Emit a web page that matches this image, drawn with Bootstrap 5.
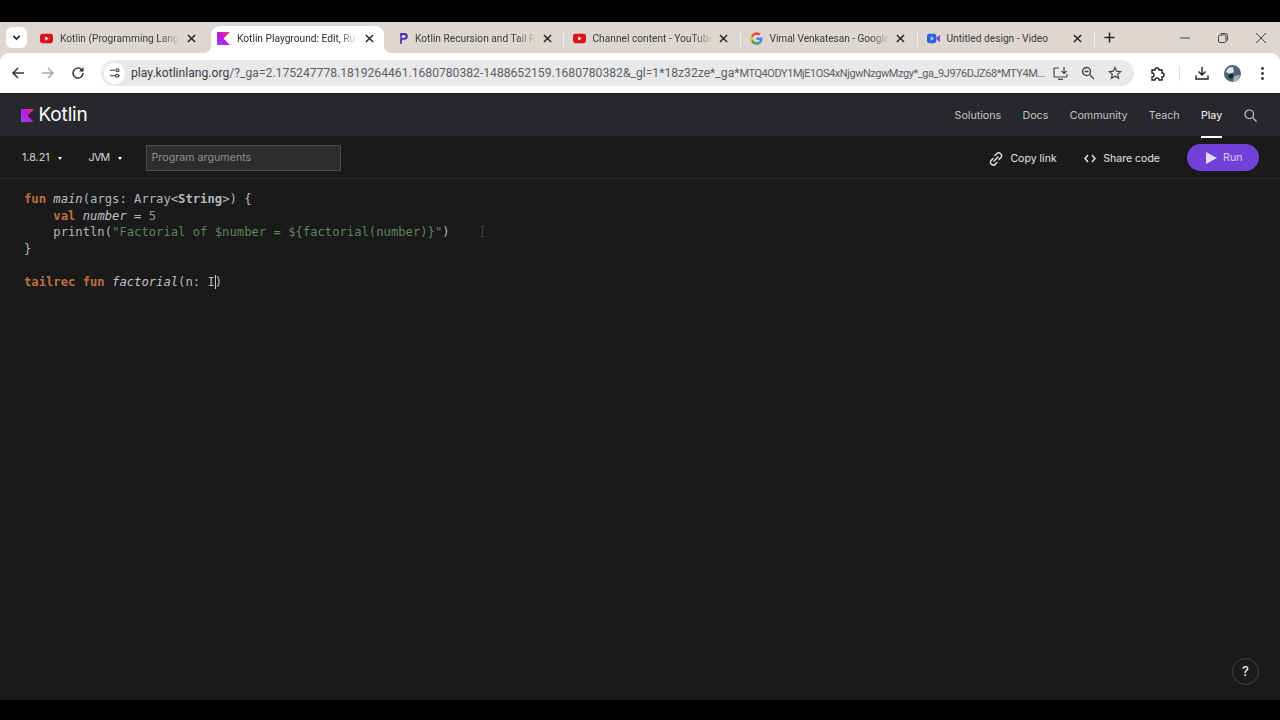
<!DOCTYPE html>
<html lang="en">
<head>
<meta charset="utf-8">
<title>Kotlin Playground</title>
<link rel="stylesheet" href="https://cdn.jsdelivr.net/npm/bootstrap@5.3.0/dist/css/bootstrap.min.css">
<style>
html,body{height:720px;overflow:hidden;background:#000}
body{padding:22px 0 20px;font-family:Inter,"Liberation Sans",sans-serif}
.shot{height:678px}
.browser-top{background:#ded6d0}
.tabstrip{height:31px;padding-left:6px}
.tab-menu{width:21px;height:21px;background:#fff;border-radius:6px;margin:5px 6px 0 0}
.chrome-tab{width:176px;height:31px;padding:1px 11.7px 0 9.3px;gap:6.5px;font:10.2px Roboto,"Liberation Sans",sans-serif;color:#3c3c3c;flex:none}
.tab-first{width:177px;padding:1px 14px 0 7px;gap:7px}
.chrome-tab.current{background:#fff;border-radius:9px 9px 0 0;padding:0 10px 3px 6.5px;gap:7px;color:#2c2c2c;width:173px;height:27px;margin:4px 3.5px 0 .5px;position:relative}
.chrome-tab.current::before,.chrome-tab.current::after{content:"";position:absolute;bottom:0;width:8px;height:8px}
.chrome-tab.current::before{left:-8px;background:radial-gradient(circle at 0 0,transparent 8px,#fff 8.5px)}
.chrome-tab.current::after{right:-8px;background:radial-gradient(circle at 100% 0,transparent 8px,#fff 8.5px)}
.tab-third{width:175.7px;padding:1px 11.2px 0 8.5px}
.tab-label{flex:1;white-space:nowrap;overflow:hidden;-webkit-mask-image:linear-gradient(90deg,#000 84%,transparent);mask-image:linear-gradient(90deg,#000 84%,transparent)}
.tab-label-plain{-webkit-mask-image:none;mask-image:none}
.tab-label-tight{letter-spacing:-.08px}
.sep{width:1px;height:15px;margin-top:9.5px;background:#f3efec;flex:none}
.fav{width:13px;height:13px;flex:none}
.tab-x{width:9px;height:9px;flex:none}
.plus-ic{margin:10px 0 0 9px}
.win-ctl{margin-left:auto;gap:26px;padding-right:13px}
.addressbar{height:40px;background:#fff;padding:0 0 0 11px;border-radius:9px 9px 0 0}
.gap-nav{margin-left:16px}
.omni{width:1033px;height:26px;border-radius:13px;background:#e9e9ea;margin-left:16px;padding:0 12px 0 3px;font:12.15px Roboto,"Liberation Sans",sans-serif;color:#5d6064;white-space:nowrap}
.host{color:#3a3c40}
.url-tail{font-size:11px;letter-spacing:-.44px}
.site-chip{width:21px;height:21px;border-radius:50%;background:#fff;flex:none;margin-right:6px}
.urltext{flex:1;overflow:hidden}
.omni-ics{gap:13px}
.ic-ext{margin-left:15.5px}
.sep-bar{width:1px;height:15px;background:#ddd;margin-left:14.5px;flex:none}
.ic-dl{margin-left:15px}
.ic-av{margin-left:14.5px}
.ic-dots{margin-left:20px}
.site-head{height:43px;background:#27282c;padding:2px 23.5px 0 21px;border-top:1px solid #17181a}
.brand-wrap{margin-top:-1px}
.brand-word{font-size:19px;font-weight:400;color:#fff;letter-spacing:-.15px;margin-left:4.5px}
.site-nav{gap:21.3px;font-size:10.7px;color:#c5c5c7}
.site-nav .on{color:#fff;position:relative}
.site-nav .on::after{content:"";position:absolute;left:0;right:0;bottom:-14px;height:2px;background:#fff}
.tool-row{height:43px;background:#1a1a1b;padding:3px 21px 0 22px;border-bottom:1px solid #2b2b2d;font-size:10.7px;color:#d8d8da}
.caret-dn{width:0;height:0;border:2.7px solid transparent;border-top:3.5px solid #fff;border-bottom:0;margin-left:8px}
.ver-jvm{margin-left:27px;letter-spacing:-.7px}
.arg-box{width:195px;height:26px;background:#2d2d2f;border:1px solid #4a4a4c;color:#8d8d8f;padding:2px 5px 0;margin:0 0 2px 24px}
.action{gap:7px;color:#e4e4e6;font-size:10.55px}
.act-gap{margin-left:27.5px}
.run-pill{width:72px;height:27px;border-radius:14px;background:#7242d8;color:#d9cdf6;margin:0 0 2px 27px;gap:6.5px;padding:2px 0 0 18.5px}
.run-pill svg{margin-top:-2px}
.code-area{height:521px;background:#1a1a1b;padding:12px 24px;font:12.2px/16.6px "DejaVu Sans Mono",monospace;color:#b4b8bc;position:relative;white-space:pre}
.kw{color:#bf6f3c;font-weight:700}
.fn{font-style:italic;color:#c0c3c7}
.str{color:#5c8556}
.num-lit{color:#8a9a88}
.bold-t{font-weight:700}
.code-gap{height:16.6px}
.caret-bar{display:inline-block;width:1px;height:14px;background:#c8c8c8;vertical-align:-3px;margin-right:-1px}
.help-btn{position:absolute;right:21px;bottom:15px;width:27px;height:27px;border-radius:50%;border:1px solid #454547;color:#eee;font:500 13px/25px Inter,sans-serif;text-align:center;background:#1b1b1d}
.ibeam{position:absolute;left:479.5px;top:47px}
</style>
</head>
<body>
<div class="shot d-flex flex-column">
  <div class="browser-top flex-shrink-0">
  <div class="tabstrip d-flex align-items-start">
    <div class="tab-menu d-flex align-items-center justify-content-center flex-shrink-0">
      <svg width="9" height="9" viewBox="0 0 10 10"><path d="M1.5 3.2 5 6.8l3.5-3.6" fill="none" stroke="#222" stroke-width="1.7"/></svg>
    </div>
    <div class="chrome-tab tab-first d-flex align-items-center">
      <svg class="fav" viewBox="0 0 14 14"><rect y="2" width="14" height="10" rx="2.6" fill="#d9141c"/><path d="M5.6 4.8v4.4L9.4 7z" fill="#fff"/></svg>
      <span class="tab-label">Kotlin (Programming Lang</span>
      <svg class="tab-x" viewBox="0 0 10 10"><path d="M1 1l8 8M9 1 1 9" stroke="#222" stroke-width="1.6"/></svg>
    </div>
    <div class="chrome-tab current d-flex align-items-center">
      <svg class="fav" viewBox="0 0 14 14"><defs><linearGradient id="kg" x1="0" y1="1" x2="1" y2="0"><stop offset="0" stop-color="#7f52ff"/><stop offset=".5" stop-color="#c711e1"/><stop offset="1" stop-color="#e44857"/></linearGradient></defs><path d="M0 0h14L7 7l7 7H0z" fill="url(#kg)"/></svg>
      <span class="tab-label">Kotlin Playground: Edit, Ru</span>
      <svg class="tab-x" viewBox="0 0 10 10"><path d="M1 1l8 8M9 1 1 9" stroke="#222" stroke-width="1.6"/></svg>
    </div>
    <div class="chrome-tab tab-third d-flex align-items-center">
      <svg class="fav" viewBox="0 0 14 14"><path d="M4.5 1H9a3.4 3.4 0 0 1 0 7.4H6.8L5.8 13H4.5z" fill="#4b2fb0"/><path d="M6.5 3.4h2.3a1.3 1.3 0 0 1 0 2.7H6z" fill="#fff"/></svg>
      <span class="tab-label">Kotlin Recursion and Tail R</span>
      <svg class="tab-x" viewBox="0 0 10 10"><path d="M1 1l8 8M9 1 1 9" stroke="#222" stroke-width="1.6"/></svg>
    </div>
    <div class="sep"></div>
    <div class="chrome-tab d-flex align-items-center">
      <svg class="fav" viewBox="0 0 14 14"><rect y="2" width="14" height="10" rx="2.6" fill="#d9141c"/><path d="M5.6 4.8v4.4L9.4 7z" fill="#fff"/></svg>
      <span class="tab-label">Channel content - YouTube</span>
      <svg class="tab-x" viewBox="0 0 10 10"><path d="M1 1l8 8M9 1 1 9" stroke="#222" stroke-width="1.6"/></svg>
    </div>
    <div class="sep"></div>
    <div class="chrome-tab d-flex align-items-center">
      <svg class="fav" viewBox="0 0 14 14"><path d="M13.4 7.2c0-.5 0-1-.1-1.4H7v2.7h3.6a3.1 3.1 0 0 1-1.3 2l2.1 1.6c1.2-1.1 2-2.8 2-4.9z" fill="#4285f4"/><path d="M7 13.6c1.8 0 3.3-.6 4.4-1.6L9.3 10.5c-.6.4-1.3.6-2.3.6-1.8 0-3.2-1.2-3.8-2.8L1.1 9.9A6.6 6.6 0 0 0 7 13.6z" fill="#34a853"/><path d="M3.2 8.3a4 4 0 0 1 0-2.6L1.1 4.1a6.6 6.6 0 0 0 0 5.8z" fill="#fbbc05"/><path d="M7 2.9c1 0 1.9.3 2.6 1l1.9-1.9A6.6 6.6 0 0 0 1.1 4.1l2.1 1.6C3.8 4.1 5.2 2.9 7 2.9z" fill="#ea4335"/></svg>
      <span class="tab-label tab-label-tight">Vimal Venkatesan - Google</span>
      <svg class="tab-x" viewBox="0 0 10 10"><path d="M1 1l8 8M9 1 1 9" stroke="#222" stroke-width="1.6"/></svg>
    </div>
    <div class="sep"></div>
    <div class="chrome-tab d-flex align-items-center">
      <svg class="fav" viewBox="0 0 14 14"><rect y="2" width="10" height="10" rx="2.5" fill="#2e5fd6"/><path d="M9.5 7 14 3v8z" fill="#8a3fe0"/><path d="M4 4.6v4.8L7.6 7z" fill="#8ee8f0"/></svg>
      <span class="tab-label tab-label-plain">Untitled design - Video</span>
      <svg class="tab-x" viewBox="0 0 10 10"><path d="M1 1l8 8M9 1 1 9" stroke="#222" stroke-width="1.6"/></svg>
    </div>
    <div class="sep"></div>
    <svg class="plus-ic flex-shrink-0" width="11" height="11" viewBox="0 0 11 11"><path d="M5.5 .5v10M.5 5.5h10" stroke="#222" stroke-width="1.5"/></svg>
    <div class="win-ctl d-flex align-items-center h-100">
      <svg width="12" height="12" viewBox="0 0 12 12"><path d="M1 6h10" stroke="#444" stroke-width="1"/></svg>
      <svg width="12" height="12" viewBox="0 0 12 12"><rect x="1.5" y="3" width="7.5" height="7.5" rx="1.5" fill="none" stroke="#444"/><path d="M3.5 1.5h5a2 2 0 0 1 2 2v5" fill="none" stroke="#444"/></svg>
      <svg width="12" height="12" viewBox="0 0 12 12"><path d="M1 1l10 10M11 1 1 11" stroke="#444" stroke-width="1"/></svg>
    </div>
  </div>
  <div class="addressbar d-flex align-items-center">
    <svg width="14" height="14" viewBox="0 0 14 14"><path d="M13 7H2M7 2 2 7l5 5" fill="none" stroke="#333" stroke-width="1.5"/></svg>
    <svg class="gap-nav" width="14" height="14" viewBox="0 0 14 14"><path d="M1 7h11M7 2l5 5-5 5" fill="none" stroke="#a9a9ab" stroke-width="1.5"/></svg>
    <svg class="gap-nav" width="14" height="14" viewBox="0 0 14 14"><path d="M12 7a5 5 0 1 1-1.5-3.5L12 5" fill="none" stroke="#333" stroke-width="1.5"/><path d="M12.5 1v4.5H8z" fill="#333"/></svg>
    <div class="omni d-flex align-items-center">
      <span class="site-chip d-flex align-items-center justify-content-center">
        <svg width="12" height="12" viewBox="0 0 12 12"><g fill="none" stroke="#333" stroke-width="1.1"><path d="M1 3.2h5M9.5 8.8H11M1 8.8h5"/><circle cx="8.5" cy="3.2" r="1.5"/><circle cx="8" cy="8.8" r="1.5"/></g></svg>
      </span>
      <span class="urltext"><span class="host">play.kotlinlang.org</span>/?_ga=2.175247778.1819264461.1680780382-1488652159.1680780382&amp;_gl=1*18z32ze*_ga*<span class="url-tail">MTQ4ODY1MjE1OS4xNjgwNzgwMzgy*_ga_9J976DJZ68*MTY4M...</span></span>
      <span class="omni-ics d-flex align-items-center ms-2">
        <svg width="15" height="14" viewBox="0 0 15 14"><path d="M6 2H2a1 1 0 0 0-1 1v7a1 1 0 0 0 1 1h11a1 1 0 0 0 1-1V8M5 13.3h5" fill="none" stroke="#444" stroke-width="1.2"/><path d="M11 1v6M8.5 5 11 7.5 13.5 5" fill="none" stroke="#444" stroke-width="1.2"/></svg>
        <svg width="14" height="14" viewBox="0 0 14 14"><circle cx="5.5" cy="5.5" r="4" fill="none" stroke="#444" stroke-width="1.3"/><path d="M8.5 8.5 13 13M3.5 5.5h4" stroke="#444" stroke-width="1.3"/></svg>
        <svg width="14" height="14" viewBox="0 0 14 14"><path d="m7 1.5 1.7 3.7 4 .4-3 2.7.9 4L7 10.3l-3.6 2 .9-4-3-2.7 4-.4z" fill="none" stroke="#444" stroke-width="1.2"/></svg>
      </span>
    </div>
    <svg class="ic-ext" width="15" height="15" viewBox="0 0 15 15"><path d="M2 4h3a2 2 0 0 1 4 0h3v3a2 2 0 0 1 0 4v3H9a2 2 0 0 0-4 0H2v-3a2 2 0 0 0 0-4z" fill="none" stroke="#222" stroke-width="1.4"/></svg>
    <span class="sep-bar"></span>
    <svg class="ic-dl" width="14" height="14" viewBox="0 0 14 14"><path d="M7 1v8M3.5 5.5 7 9l3.5-3.5M1 9.5V13h12V9.5" fill="none" stroke="#222" stroke-width="1.4"/></svg>
    <svg class="ic-av" width="17" height="17" viewBox="0 0 17 17"><circle cx="8.5" cy="8.5" r="8.5" fill="#4d6675"/><path d="M2 7a7 6 0 0 1 7-5l1 5-4 2z" fill="#d8e3ea"/><path d="M9 17l1-6 6-1a8 8 0 0 1-7 7z" fill="#9fb4bd"/><circle cx="7" cy="11" r="2.5" fill="#1d2a33"/></svg>
    <svg class="ic-dots" width="3" height="13" viewBox="0 0 3 13"><circle cx="1.5" cy="1.5" r="1.4" fill="#333"/><circle cx="1.5" cy="6.5" r="1.4" fill="#333"/><circle cx="1.5" cy="11.5" r="1.4" fill="#333"/></svg>
  </div>
  </div>
  <header class="site-head d-flex align-items-center justify-content-between flex-shrink-0">
    <div class="brand-wrap d-flex align-items-center">
      <svg width="13" height="13" viewBox="0 0 13 13"><defs><linearGradient id="kb" x1="0" y1="1" x2="1" y2="0"><stop offset="0" stop-color="#7f52ff"/><stop offset=".55" stop-color="#c711e1"/><stop offset="1" stop-color="#e44857"/></linearGradient></defs><path d="M0 0h13L6.5 6.5 13 13H0z" fill="url(#kb)"/></svg>
      <span class="brand-word">Kotlin</span>
    </div>
    <nav class="site-nav d-flex align-items-center">
      <span>Solutions</span><span>Docs</span><span>Community</span><span>Teach</span><span class="on">Play</span>
      <svg width="13" height="13" viewBox="0 0 13 13"><circle cx="5.3" cy="5.3" r="4.3" fill="none" stroke="#c5c5c7" stroke-width="1.2"/><path d="m8.5 8.5 4 4" stroke="#c5c5c7" stroke-width="1.2"/></svg>
    </nav>
  </header>
  <div class="tool-row d-flex align-items-center flex-shrink-0">
    <span class="d-flex align-items-center">1.8.21<i class="caret-dn"></i></span>
    <span class="d-flex align-items-center ver-jvm">JVM<i class="caret-dn"></i></span>
    <div class="arg-box d-flex align-items-center">Program arguments</div>
    <div class="ms-auto d-flex align-items-center">
      <span class="action d-flex align-items-center">
        <svg width="14" height="14" viewBox="0 0 14 14"><g fill="none" stroke="#e4e4e6" stroke-width="1.4" stroke-linecap="round"><path d="M6 3.5 7.5 2a2.8 2.8 0 0 1 4.4 3.5L10 7.5"/><path d="M8 10.5 6.5 12a2.8 2.8 0 0 1-4.4-3.500L4 6.500"/><path d="M5 9l4-4"/></g></svg>
        Copy link
      </span>
      <span class="action act-gap d-flex align-items-center">
        <svg width="12" height="9" viewBox="0 0 12 9"><path d="M4 1 1 4.5 4 8M8 1l3 3.5L8 8" fill="none" stroke="#e4e4e6" stroke-width="1.5"/></svg>
        Share code
      </span>
      <span class="run-pill d-flex align-items-center">
        <svg width="11" height="12" viewBox="0 0 11 12"><path d="M0 0v12l11-6z" fill="#e2d8f8"/></svg>
        Run
      </span>
    </div>
  </div>
  <main class="code-area flex-grow-1"><div><span class="kw">fun</span> <span class="fn">main</span>(args: Array&lt;<span class="bold-t">String</span>&gt;) {</div><div>    <span class="kw">val</span> <span class="fn">number</span> = <span class="num-lit">5</span></div><div>    println(<span class="str">"Factorial of $number = ${factorial(number)}"</span>)</div><div>}</div><div class="code-gap"></div><div><span class="kw">tailrec fun</span> <span class="fn">factorial</span>(n: I<span class="caret-bar"></span>)</div>
    <svg class="ibeam" width="5" height="11" viewBox="0 0 5 11"><path d="M.5.5h4M.5 10.5h4M2.5.5v10" stroke="#3f3f3f" fill="none"/></svg>
    <div class="help-btn">?</div>
  </main>
</div>
<script src="https://cdn.jsdelivr.net/npm/bootstrap@5.3.0/dist/js/bootstrap.bundle.min.js"></script>
</body>
</html>
